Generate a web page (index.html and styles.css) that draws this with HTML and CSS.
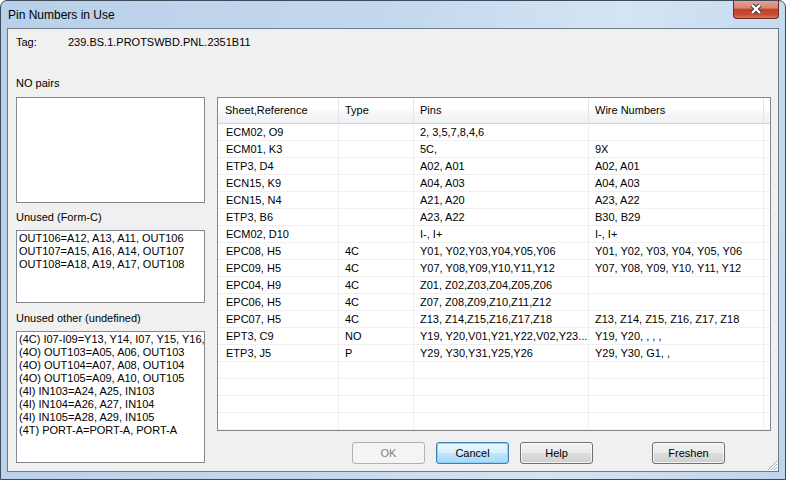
FILE: index.html
```html
<!DOCTYPE html>
<html lang="en">
<head>
  <meta charset="UTF-8" />
  <title>Pin Numbers in Use</title>
  <link rel="stylesheet" href="styles.css">
</head>
<body>
  <div class="window">
    <div class="titlebar">
      <span class="title">Pin Numbers in Use</span>
      <div class="close-btn">
        <svg width="14" height="12" viewBox="0 0 14 12">
          <path d="M3 2 L11 10 M11 2 L3 10" stroke="#3a3a3a" stroke-width="4.4" fill="none" />
          <path d="M3 2 L11 10 M11 2 L3 10" stroke="#ffffff" stroke-width="2.4" fill="none" />
        </svg>
      </div>
    </div>

    <div class="client">
      <div class="tag-row">
        <span class="tag-label">Tag:</span>
        <span>239.BS.1.PROTSWBD.PNL.2351B11</span>
      </div>
      <div class="no-pairs">NO pairs</div>

      <div class="main">
        <div class="side">
          <div class="listbox lb-pairs"></div>
          <div class="side-label">Unused (Form-C)</div>
          <div class="listbox lb-formc">
            <div>OUT106=A12, A13, A11, OUT106</div>
            <div>OUT107=A15, A16, A14, OUT107</div>
            <div>OUT108=A18, A19, A17, OUT108</div>
          </div>
          <div class="side-label second">Unused other (undefined)</div>
          <div class="listbox lb-other">
            <div>(4C) I07-I09=Y13, Y14, I07, Y15, Y16, I08, Y17, Y18, I09</div>
            <div>(4O) OUT103=A05, A06, OUT103</div>
            <div>(4O) OUT104=A07, A08, OUT104</div>
            <div>(4O) OUT105=A09, A10, OUT105</div>
            <div>(4I) IN103=A24, A25, IN103</div>
            <div>(4I) IN104=A26, A27, IN104</div>
            <div>(4I) IN105=A28, A29, IN105</div>
            <div>(4T) PORT-A=PORT-A, PORT-A</div>
          </div>
        </div>

        <div class="right">
          <div class="listview">
            <div class="lv-row lv-header">
              <span>Sheet,Reference</span><span>Type</span><span>Pins</span><span>Wire Numbers</span><span></span>
            </div>
            <div class="lv-row"><span>ECM02, O9</span><span></span><span>2, 3,5,7,8,4,6</span><span></span><span></span></div>
            <div class="lv-row"><span>ECM01, K3</span><span></span><span>5C,</span><span>9X</span><span></span></div>
            <div class="lv-row"><span>ETP3, D4</span><span></span><span>A02, A01</span><span>A02, A01</span><span></span></div>
            <div class="lv-row"><span>ECN15, K9</span><span></span><span>A04, A03</span><span>A04, A03</span><span></span></div>
            <div class="lv-row"><span>ECN15, N4</span><span></span><span>A21, A20</span><span>A23, A22</span><span></span></div>
            <div class="lv-row"><span>ETP3, B6</span><span></span><span>A23, A22</span><span>B30, B29</span><span></span></div>
            <div class="lv-row"><span>ECM02, D10</span><span></span><span>I-, I+</span><span>I-, I+</span><span></span></div>
            <div class="lv-row"><span>EPC08, H5</span><span>4C</span><span>Y01, Y02,Y03,Y04,Y05,Y06</span><span>Y01, Y02, Y03, Y04, Y05, Y06</span><span></span></div>
            <div class="lv-row"><span>EPC09, H5</span><span>4C</span><span>Y07, Y08,Y09,Y10,Y11,Y12</span><span>Y07, Y08, Y09, Y10, Y11, Y12</span><span></span></div>
            <div class="lv-row"><span>EPC04, H9</span><span>4C</span><span>Z01, Z02,Z03,Z04,Z05,Z06</span><span></span><span></span></div>
            <div class="lv-row"><span>EPC06, H5</span><span>4C</span><span>Z07, Z08,Z09,Z10,Z11,Z12</span><span></span><span></span></div>
            <div class="lv-row"><span>EPC07, H5</span><span>4C</span><span>Z13, Z14,Z15,Z16,Z17,Z18</span><span>Z13, Z14, Z15, Z16, Z17, Z18</span><span></span></div>
            <div class="lv-row"><span>EPT3, C9</span><span>NO</span><span>Y19, Y20,V01,Y21,Y22,V02,Y23...</span><span>Y19, Y20, , , ,</span><span></span></div>
            <div class="lv-row"><span>ETP3, J5</span><span>P</span><span>Y29, Y30,Y31,Y25,Y26</span><span>Y29, Y30, G1, ,</span><span></span></div>
            <div class="lv-row"><span></span><span></span><span></span><span></span><span></span></div>
            <div class="lv-row"><span></span><span></span><span></span><span></span><span></span></div>
            <div class="lv-row"><span></span><span></span><span></span><span></span><span></span></div>
            <div class="lv-row"><span></span><span></span><span></span><span></span><span></span></div>
          </div>

          <div class="buttons">
            <button class="btn btn-disabled" disabled>OK</button>
            <button class="btn btn-default">Cancel</button>
            <button class="btn">Help</button>
            <button class="btn btn-freshen">Freshen</button>
          </div>
        </div>
      </div>

      <svg class="grip" width="12" height="12" viewBox="0 0 12 12">
        <path d="M11 2 L2 11 M11 5 L5 11 M11 8 L8 11" stroke="#a7aeb8" stroke-width="1" fill="none" />
        <path d="M12 3 L3 12 M12 6 L6 12 M12 9 L9 12" stroke="#ffffff" stroke-width="1" fill="none" />
      </svg>
    </div>
  </div>
</body>
</html>
```

FILE: styles.css
```css
* {
  box-sizing: border-box;
}
body {
  margin: 0;
  font-family: "Liberation Sans", Arial, sans-serif;
  font-size: 11px;
  color: #000;
  background: #fff;
}
.window {
  width: 786px;
  height: 480px;
  border: 1px solid #3f4b58;
  border-radius: 7px 7px 0 0;
  background: linear-gradient(100deg, #b8d0e9 0%, #c3d8ee 45%, #d5e4f4 72%, #bfd5ec 100%);
  display: flex;
  flex-direction: column;
  overflow: hidden;
}
.titlebar {
  height: 27px;
  flex-shrink: 0;
  display: flex;
  align-items: center;
  padding-left: 7px;
}
.title {
  font-size: 12px;
  padding-top: 1px;
}
.close-btn {
  margin-left: auto;
  margin-right: 6px;
  align-self: flex-start;
  width: 46px;
  height: 19px;
  margin-top: -1px;
  border: 1px solid #6b2a22;
  border-top: 0;
  border-radius: 0 0 4px 4px;
  background: linear-gradient(#e8a597 0%, #d98370 45%, #c2432c 52%, #c64a31 78%, #d9765a 100%);
  display: flex;
  align-items: center;
  justify-content: center;
}
.client {
  margin: 0 6px 7px;
  height: 444px;
  border: 1px solid #6c7b8b;
  background: #f0f0f0;
  padding: 7px 7px 0 8px;
  position: relative;
}
.tag-row {
  display: flex;
  line-height: 13px;
}
.tag-label {
  width: 52px;
}
.no-pairs {
  margin-top: 28px;
  line-height: 13px;
}
.main {
  display: flex;
  gap: 12px;
  margin-top: 7px;
}
.side {
  width: 189px;
  display: flex;
  flex-direction: column;
}
.listbox {
  background: #fff;
  border: 1px solid #828790;
  padding: 1px 2px;
  line-height: 13px;
  white-space: nowrap;
  overflow: hidden;
}
.lb-pairs {
  height: 106px;
}
.lb-formc {
  height: 73px;
}
.lb-other {
  height: 132px;
}
.side-label {
  padding: 8px 0 6px;
  line-height: 13px;
}
.side-label.second {
  padding-top: 9px;
}
.right {
  width: 554px;
}
.listview {
  height: 334px;
  border: 1px solid #828790;
  background: #fff;
  overflow: hidden;
}
.lv-row {
  display: grid;
  grid-template-columns: 121px 75px 175px 175px 1fr;
  height: 17px;
}
.lv-row > span {
  border-right: 1px solid #f0f0f0;
  border-bottom: 1px solid #f0f0f0;
  padding-left: 6px;
  line-height: 16px;
  white-space: nowrap;
  overflow: hidden;
}
.lv-row > span:first-child {
  padding-left: 8px;
}
.lv-row > span:last-child {
  border-right: 0;
}
.lv-header {
  height: 26px;
  background: linear-gradient(#ffffff 0%, #ffffff 45%, #f6f7f9 55%, #f0f1f3 100%);
}
.lv-header > span {
  line-height: 25px;
  border-right: 1px solid #e3e5e8;
  border-bottom: 1px solid #d5d5d5;
}
.lv-header > span:first-child {
  padding-left: 7px;
}
.buttons {
  display: flex;
  gap: 11px;
  margin-top: 11px;
  padding-left: 135px;
}
.btn {
  width: 73px;
  height: 22px;
  padding: 0;
  font-family: "Liberation Sans", Arial, sans-serif;
  font-size: 11px;
  color: #000;
  border: 1px solid #707070;
  border-radius: 3px;
  background: linear-gradient(#f2f2f2 0%, #ebebeb 50%, #dddddd 51%, #cfcfcf 100%);
  box-shadow: inset 0 0 0 1px rgba(255, 255, 255, 0.7);
}
.btn-default {
  border-color: #3c7fb1;
  background: linear-gradient(#eaf6fd 0%, #d9f0fc 50%, #bee6fd 51%, #a7d9f5 100%);
  box-shadow: inset 0 0 0 1px #8fd0f5;
}
.btn-disabled {
  color: #838383;
  border-color: #adb2b5;
  background: #f4f4f4;
  box-shadow: none;
}
.btn-freshen {
  margin-left: 48px;
}
.grip {
  position: absolute;
  right: 0;
  bottom: 0;
}
```
